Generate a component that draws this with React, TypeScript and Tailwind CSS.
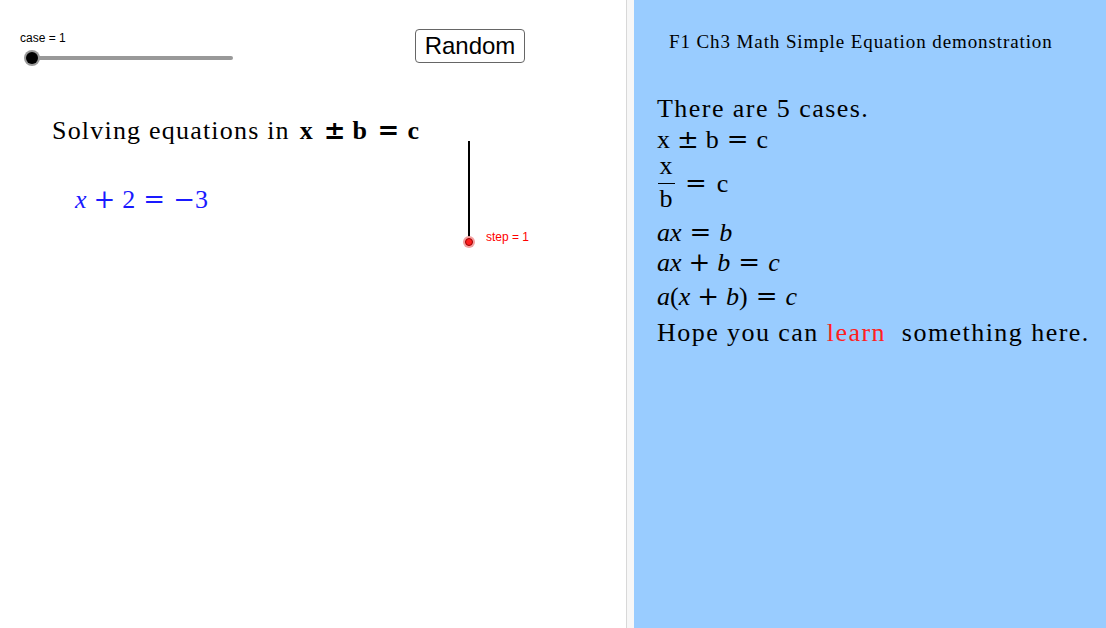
import React from "react";

const serif = "font-['Liberation_Serif',serif]";
const sans = "font-['Liberation_Sans',Arial,sans-serif]";

// math operator: wider glyph + TeX-like spacing around it
function Op({ children, w = "mx-[8px]", bold = false }: { children: React.ReactNode; w?: string; bold?: boolean }) {
  return (
    <span className={`inline-block font-['DejaVu_Serif',serif] not-italic ${bold ? "font-bold" : "font-normal"} ${w}`}>
      {children}
    </span>
  );
}

function CaseSlider() {
  return (
    <div className="absolute left-[20px] top-[31px] w-[220px]">
      <div className={`${sans} text-[12px] leading-[14px] text-black`}>case = 1</div>
      <div className="relative mt-[5px] h-[16px]">
        <div className="absolute left-[12px] top-[6px] h-[4px] w-[201px] rounded-full bg-[#999999]" />
        <div className="absolute left-[4px] top-0 h-[16px] w-[16px] rounded-full bg-[#9a9a9a] p-[2px]">
          <div className="h-full w-full rounded-full bg-black" />
        </div>
      </div>
    </div>
  );
}

function StepSlider() {
  return (
    <>
      <div className="absolute left-[468px] top-[141px] h-[100px] w-[2px] bg-black" />
      <div className="absolute left-[463px] top-[236px] h-[12px] w-[12px] rounded-full bg-[#f4a0a0] p-[2px]">
        <div className="h-full w-full rounded-full border border-[#900] bg-[#ff2020]" />
      </div>
      <div className={`absolute left-[486px] top-[230px] ${sans} text-[12px] leading-[14px] text-[#ff0000]`}>
        step = 1
      </div>
    </>
  );
}

export default function App() {
  return (
    <div className="flex h-[628px] w-[1106px] overflow-hidden bg-white">
      <div className="relative h-full w-[626px] shrink-0 bg-white">
        <CaseSlider />
        <button
          className={`absolute left-[415px] top-[29px] h-[34px] w-[110px] rounded-[4px] border border-[#666] bg-white ${sans} text-[24px] leading-none text-black`}
        >
          Random
        </button>
        <div className={`absolute left-[52px] top-[114px] ${serif} text-[26px] leading-[32px] text-black whitespace-nowrap`}>
          <span className="tracking-[1.2px]">Solving equations in</span>
          <b className="ml-[10px]">
            <span className="inline-block w-[17px]">x</span>
            <Op bold w="mx-[7px]">±</Op>
            <span className="inline-block w-[17px]">b</span>
            <Op bold w="mx-[8px]">=</Op>
            <span className="inline-block">c</span>
          </b>
        </div>
        <div className={`absolute left-[75px] top-[183px] ${serif} text-[26px] leading-[32px] text-[#1a1aff] whitespace-nowrap`}>
          <i>x</i>
          <Op w="mx-[7px]">+</Op>2<Op w="mx-[8px]">=</Op>
          <Op w="mx-0">−</Op>3
        </div>
        <StepSlider />
      </div>
      <div className="h-full w-[1px] shrink-0 bg-[#d8d8d8]" />
      <div className="h-full w-[7px] shrink-0 bg-[#f7f7f7]" />
      <div className={`flex h-full flex-1 flex-col bg-[#99ccff] ${serif} text-black`}>
        <div className="pl-[35px] pt-[30px] text-[19px] leading-[24px] tracking-[0.9px] whitespace-nowrap">
          F1 Ch3 Math Simple Equation demonstration
        </div>
        <div className="mt-[40px] flex flex-col pl-[23px] text-[26px] whitespace-nowrap">
          <div className="h-[30px] leading-[30px] tracking-[1.45px]">There are 5 cases.</div>
          <div className="h-[31px] leading-[31px]">
            x<Op w="mx-[7px]">±</Op>b<Op>=</Op>c
          </div>
          <div className="flex items-center">
            <div className="flex w-[18px] flex-col items-center">
              <span className="h-[22px] leading-[22px]">x</span>
              <span className="mt-[6px] h-[1px] w-[17px] bg-black" />
              <span className="mt-[3px] h-[24px] leading-[24px]">b</span>
            </div>
            <span className="ml-[10px] font-['DejaVu_Serif',serif]">=</span>
            <span className="ml-[10px]">c</span>
          </div>
          <div className="mt-[6px] h-[30px] leading-[30px]">
            <i>ax</i>
            <Op>=</Op>
            <i>b</i>
          </div>
          <div className="h-[30px] leading-[30px]">
            <i>ax</i>
            <Op w="mx-[7px]">+</Op>
            <i>b</i>
            <Op>=</Op>
            <i>c</i>
          </div>
          <div className="mt-[4px] h-[30px] leading-[30px]">
            <i>a</i>(<i>x</i>
            <Op w="mx-[7px]">+</Op>
            <i>b</i>)<Op>=</Op>
            <i>c</i>
          </div>
          <div className="mt-[7px] h-[30px] leading-[30px] tracking-[1.45px]">
            Hope you can <span className="text-[#ff2020]">learn</span>&nbsp; something here.
          </div>
        </div>
      </div>
    </div>
  );
}
